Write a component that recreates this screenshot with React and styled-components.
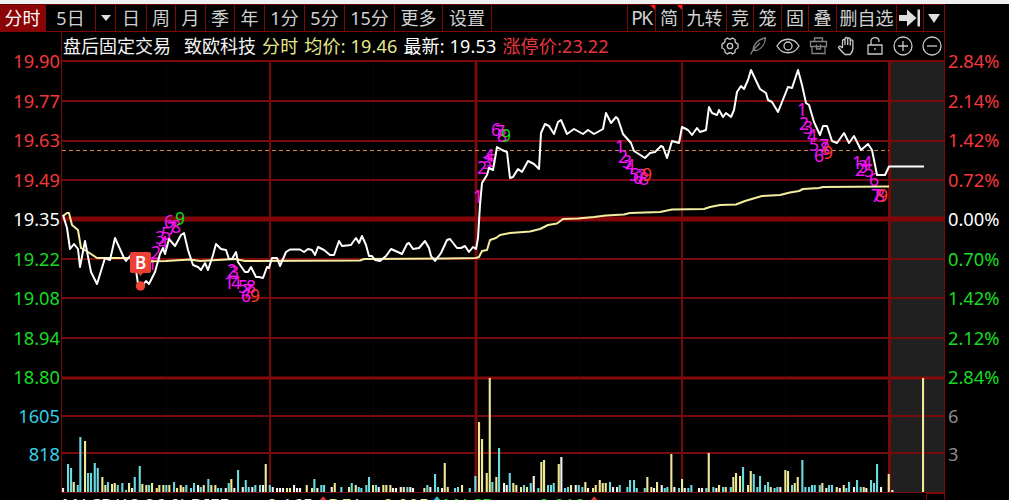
import styled, { createGlobalStyle } from "styled-components";

const periods = [
  { label: "日", width: 31 },
  { label: "周", width: 29 },
  { label: "月", width: 30 },
  { label: "季", width: 29 },
  { label: "年", width: 30 },
  { label: "1分", width: 40 },
  { label: "5分", width: 40 },
  { label: "15分", width: 50 },
  { label: "更多", width: 48 },
  { label: "设置", width: 49 },
];

const tools = [
  { label: "PK", width: 28, corner: true, tight: true },
  { label: "简", width: 27, corner: true },
  { label: "九转", width: 44 },
  { label: "竞", width: 27 },
  { label: "笼", width: 28 },
  { label: "固", width: 27 },
  { label: "叠", width: 28 },
  { label: "删自选", width: 60 },
];

const prices = [
  ["19.90", "2.84%", "up"],
  ["19.77", "2.14%", "up"],
  ["19.63", "1.42%", "up"],
  ["19.49", "0.72%", "up"],
  ["19.35", "0.00%", "flat"],
  ["19.22", "0.70%", "down"],
  ["19.08", "1.42%", "down"],
  ["18.94", "2.12%", "down"],
  ["18.80", "2.84%", "down"],
];

const volumes = [
  ["1605", "6"],
  ["818", "3"],
];

const tones = {
  up: "#f2383c",
  down: "#17dc22",
  flat: "#ffffff",
  volume: "#35cfe6",
  muted: "#8c8c8c",
};

const priceLine =
  "63,215 67,228 70,249 74,244 78,249 80,267 85,241 91,272 97,284 105,258 110,260 115,238 124,258 126,261 130,256 136,270 138,284 142,286 146,281 149,284 155,272 160,254 163,248 165,254 169,239 175,246 181,235 184,233 188,250 193,265 198,267 201,270 205,263 208,270 213,255 216,244 221,249 226,250 229,259 232,259 236,252 238,262 245,272 248,272 251,267 256,277 259,277 263,278 267,267 269,268 272,258 277,258 280,266 286,252 290,249.5 300,249.5 304,252 308,249 312,250 315,255 318,247 324,250 330,255 334,255 339,241 342,246 351,245 353,242 356,238 359,243 362,236 366,245 369,256 372,256 375,260 380,261 386,256 391,249 400,253 402,254 407,244 409,243 413,249 419,248 425,241 429,248 431,256 435,261 441,253 447,240 450,239 457,248 461,248 465,246 469,252 473,247 476,249 478,238 480,205 482,183 487,175 489,168 493,170 497,147 502,150 507,152 510,178 513,177 518,169 522,172 528,161 534,164 539,169 541,133 545,124 549,126 554,134 558,122 561,120 567,134 574,129 583,134 588,130 594,134 603,129 606,113 611,123 616,117 618,119 623,134 631,143 634,151 645,158 650,153 655,152 661,146 663,147 667,158 672,141 679,143 682,127 688,130 692,135 697,128 700,132 706,130 709,107 712,113 717,115 719,110 723,117 726,113 731,117 734,110 737,92 741,86 744,89 748,80 751,70 760,89 766,93 768,100 772,102 778,112 788,87 792,88 798,70 802,85 806,103 809,105 814,122 820,135 823,126 827,126 832,141 837,143 844,133 849,143 854,136 861,150 868,144 872,150 877,175 885,175 889,166.5 924,166.5";

const averageLine =
  "63,216 67,213 69,213 72,225 78,230 81,248 88,252 97,258 130,258 140,261.5 166,261 190,259.5 200,261 235,259 245,261 360,260.5 364,259 445,258.5 476,258 479,257 482,251 487,250 490,240 496,238 500,235 510,233 530,231.5 540,229 548,225 557,223.5 563,219 578,218.5 594,217 606,215.5 624,214.5 630,213 660,212 672,209.5 704,209 710,207 720,205 736,204.5 745,201 762,196 780,195 790,192.5 799,191 803,189 819,188 823,187 889,186.5";

// nine-turn counts: the last number of each run is coloured by direction
const turns = [
  { end: "#12d81c", at: [[152, 264], [156, 253], [160, 238], [163, 243], [166, 234], [169, 222], [172, 229], [176, 227], [180, 219]] },
  { end: "#ff3b30", at: [[229, 283], [232, 271], [234, 273], [236, 283], [243, 287], [246, 296], [248, 291], [251, 287], [255, 296]] },
  { end: "#12d81c", at: [[478, 197], [482, 168], [487, 163], [489, 156], [491, 161], [496, 130], [500, 132], [502, 136], [506, 136]] },
  { end: "#ff3b30", at: [[620, 147], [623, 157], [627, 162], [630, 166], [634, 175], [638, 178], [641, 176], [644, 179], [647, 175]] },
  { end: "#ff3b30", at: [[802, 110], [804, 124], [808, 128], [812, 136], [814, 145], [819, 156], [824, 146], [825, 149], [828, 153]] },
  { end: "#ff3b30", at: [[857, 163], [860, 170], [863, 167], [867, 163], [869, 171], [874, 180], [876, 196], [880, 196], [883, 196]] },
];

// x, height, colour key
const bars =
  "63,4w 68,28c 71,24c 73.7,10y 77.7,7c 80.3,55c 85,51y 88,19c 91,19c 94.7,29c 97.7,24c 102.3,15y 105.3,7y 108,10c 112,8y 114.7,9y 117.7,7c 122.3,9c 126,2c 129,9y 132,4w 134.7,15c 139.7,26c 142.3,8y 146.3,7y 149,7c 152,9y 156.7,4y 159.3,7y 163.3,7y 166.3,7c 169.3,7y 174,10c 177,4y 180.7,7y 183.3,5y 186.3,7c 191,4c 194,9c 198,7w 200.7,5c 203.7,7y 208.3,13c 211.3,7y 215.3,7y 218,4c 221,4c 225.7,4w 228.7,9c 231.3,13y 234.3,4w 238,22c 242.7,5w 245.7,12c 248.7,5c 252.3,5w 255.3,7c 260,7c 263,7w 265.7,28y 269.7,7c 272.7,5w 277,4w 280,4w 283,4w 287,4y 290,4y 294,7w 297,4w 300,4w 306.7,7y 312,4y 314.3,13c 317.3,4w 321.3,7c 324,7c 331.7,5w 334.7,9y 341.3,5c 349,5y 351.7,9c 355.7,7y 358.7,5c 361.3,4c 366.3,7c 369,15c 373,7y 376,7c 378.7,5w 383.3,7y 386.3,7y 390.3,7y 393,4w 396,4w 400.7,5w 403.7,5y 407.3,5c 410.3,5w 413,4w 424.3,4y 427.3,7c 430.3,5w 435,18c 438,5c 442,4w 444.7,29y 447.7,5y 455,4c 458,5c 462,7y 469.7,4c 475.3,16c 479,70y 482,53y 486.7,19y 489.7,114y 492.3,10c 496.3,15y 499,44c 504,9w 506.7,7w 509.7,19c 513.3,9y 516.3,7y 521,5y 524,7c 527,5y 530.7,9c 533.7,16w 538.3,4c 541.3,30y 544,32y 548,7c 551,7c 553.7,9c 558.7,28y 561.3,35w 565,4c 568,5c 571,7y 575.7,7w 578.7,7c 582.3,5c 585.3,10y 588,4w 593,4y 595.7,7y 599.7,12y 602.7,9y 605.7,9y 610,10c 613,5w 617,5w 619.7,7c 627.3,5c 630,12c 634,12c 636.7,4c 644.7,4c 647.3,15y 651.3,5y 654,4w 657,10y 661.7,7w 664.7,4c 667.3,5c 671.3,38y 674.3,5w 679,4c 682,13y 684.7,4w 688.3,4c 691.3,7c 699,4w 702,4w 706.3,4c 708.7,39y 713.3,5c 716.3,4w 719,7y 723,5c 725.7,5y 730.7,5c 733.3,15y 736,19y 740,16y 743,25c 748,7y 750.7,21y 753.7,18c 757.3,5c 760,16c 765,7c 768,10c 770.7,5y 774.5,4c 777.3,5c 780.3,5w 785.3,22y 788,21y 792,7c 794.7,9y 797.7,15y 802.3,32c 805.3,5c 809,5c 812,7c 814.7,7c 819.7,7c 822.3,9y 826.3,4w 829,7c 832,7c 836.7,5y 839.7,4w 843.7,7y 846.3,4c 849,10c 854,5w 857,12c 860.7,5c 863.7,5y 866.3,4w 871,12c 874,9c 877,28c 881,5w 888.7,18y 892.3,2w 923,114y"
    .split(" ")
    .map((item) => {
      const [x, rest] = item.split(",");
      return { x: Number(x), height: parseInt(rest, 10), tone: rest.slice(-1) };
    });

const barTones = { w: "#f4f4ee", c: "#6cdbe0", y: "#efe896" };

function Chart() {
  return (
    <Plot viewBox="62 62 883 431">
      <rect x="891" y="62" width="53" height="430" fill="#202020" />
      <g stroke="#780a0c" strokeWidth="2">
        {[101, 141, 180, 259, 298, 338, 416, 453].map((y) => (
          <path key={y} d={`M62 ${y}H944`} />
        ))}
        <path d="M62 378H944" stroke="#860a0a" strokeWidth="3" />
        <path d="M62 219H944" stroke="#840608" strokeWidth="5" />
        <path d="M270 62V492M682 62V492" />
        <path d="M476 62V492M889.5 62V492" strokeWidth="3" />
        <path d="M62 492.5H944" strokeWidth="1" />
      </g>
      <path
        d="M166.5 62V492M373.5 62V492M579.5 62V492M785.5 62V492"
        stroke="#350606"
        strokeDasharray="1 3"
      />
      <path d="M62 150.5H889" stroke="#d08a52" strokeDasharray="4 3" />
      {bars.map((bar) => (
        <rect
          key={bar.x}
          x={bar.x - 1}
          y={492 - bar.height}
          width="2.1"
          height={bar.height}
          fill={barTones[bar.tone]}
        />
      ))}
      {turns.map((run, index) => (
        <g key={index}>
          {run.at.map(([x, y], i) => (
            <TurnNumber key={i} x={x} y={y + 6.3} fill={i === 8 ? run.end : "#f414f4"}>
              {i + 1}
            </TurnNumber>
          ))}
        </g>
      ))}
      <Line points={averageLine} stroke="#f3eda0" />
      <Line points={priceLine} stroke="#ffffff" />
      <circle cx="140.5" cy="286" r="4.7" fill="#f04432" />
      <path
        d="M132 252h17a2 2 0 0 1 2 2v17a2 2 0 0 1-2 2h-6l-2.500 3-2.500-3h-6a2 2 0 0 1-2-2v-17a2 2 0 0 1 2-2z"
        fill="#ee3f35"
      />
      <BuyText x="140.500" y="269">
        B
      </BuyText>
    </Plot>
  );
}

function App() {
  return (
    <Screen>
      <GlobalStyle />
      <TopEdge />
      <Toolbar>
        <Tab $width={46} $active>
          分时
        </Tab>
        <Tab $width={50}>5日</Tab>
        <Tab $width={20}>
          <Arrow />
        </Tab>
        {periods.map((item) => (
          <Tab key={item.label} $width={item.width}>
            {item.label}
          </Tab>
        ))}
        <Tools>
          {tools.map((item) => (
            <Tab key={item.label} $width={item.width} $tight={item.tight}>
              {item.label}
              {item.corner && <Corner />}
            </Tab>
          ))}
          <Tab $width={27}>
            <svg width="22" height="20" viewBox="0 0 22 20" fill="#dedede">
              <path d="M0 7h8V1.500l9.500 8.500L8 18.500V13H0zM18.500 1.500H21v17h-2.500z" />
            </svg>
          </Tab>
          <Tab $width={21}>
            <Arrow $large />
          </Tab>
        </Tools>
      </Toolbar>

      <Body>
        <Axis $side="left">
          {prices.map(([price, , tone]) => (
            <Tick key={price} $tone={tone}>
              {price}
            </Tick>
          ))}
          {volumes.map(([amount]) => (
            <Tick key={amount} $tone="volume" $short>
              {amount}
            </Tick>
          ))}
        </Axis>
        <Center>
          <Info>
            <Name>盘后固定交易</Name>
            <Name>致欧科技</Name>
            <Value $color="#e9e98c">分时</Value>
            <Value $color="#e9e98c">均价: 19.46</Value>
            <Value $color="#ffffff">最新: 19.53</Value>
            <Value $color="#e8363f">涨停价:23.22</Value>
            <Actions>
              <svg width="20" height="20" viewBox="0 0 20 20">
                <path d="M7.500 2Q10 4.500 12.500 2L15 3.500Q14.500 7 18 8v4q-3.500 1-3 4.500L12.500 18Q10 15.500 7.500 18L5 16.500Q5.500 13 2 12V8q3.500-1 3-4.500z" />
                <circle cx="10" cy="10" r="2.700" />
              </svg>
              <Dim width="18" height="20" viewBox="0 0 18 20">
                <path d="M1.500 18.500L4 14C4.500 8.500 9 3 16.500 2c-.5 6-4 11-9 12.500L4 14M4 14L11 7" />
              </Dim>
              <svg width="24" height="20" viewBox="0 0 24 20">
                <path d="M1 10C6 1 18 1 23 10 18 19 6 19 1 10z" />
                <circle cx="12" cy="10" r="4" />
              </svg>
              <Dim width="19" height="20" viewBox="0 0 19 20">
                <path d="M5.500 5.500V2h8v3.500M1.500 5.500h16v5h-16zM3 10.500v7h13v-7M7.500 8.500v4.500h4V8.500" />
              </Dim>
              <svg width="20" height="20" viewBox="0 0 20 20">
                <path d="M5.500 12V4.500q1.200-2 2.500 0V9V2.500q1.300-2 2.700 0V9V2.800q1.300-2 2.600 0V9.500V4.800q1.300-1.800 2.600 0V12q0 4-2.900 6.500H8Q4.500 15.500 1.500 11.500q.8-2 2.500-.8L5.500 12" />
              </svg>
              <svg width="18" height="20" viewBox="0 0 18 20">
                <path d="M2 9h14v9H2zM5 9V5c0-4.500 8-4.500 8 0v1M9 12v2" />
              </svg>
              <svg width="20" height="20" viewBox="0 0 20 20">
                <circle cx="10" cy="10" r="9" />
                <path d="M5 10h10M10 5v10" />
              </svg>
              <svg width="20" height="20" viewBox="0 0 20 20">
                <circle cx="10" cy="10" r="9" />
                <path d="M5 10h10" />
              </svg>
            </Actions>
          </Info>
          <Chart />
        </Center>
        <Axis $side="right">
          {prices.map(([price, percent, tone]) => (
            <Tick key={price} $tone={tone}>
              {percent}
            </Tick>
          ))}
          {volumes.map(([, amount]) => (
            <Tick key={amount} $tone="muted" $short>
              {amount}
            </Tick>
          ))}
        </Axis>
      </Body>

      <Footer>
        <FooterText $width={205} $color="#f0f0f0">MACD(12,26,9) DIFF:</FooterText>
        <FooterText $width={47} $color="#f0f0f0">0.165</FooterText>
        <FooterText $width={14} $color="#f2383c">↑</FooterText>
        <FooterText $width={55} $color="#e9e98c">DEA:</FooterText>
        <FooterText $width={45} $color="#e9e98c">0.005</FooterText>
        <FooterText $width={15} $color="#35cfe6">↑</FooterText>
        <FooterText $width={96} $color="#17dc22">MACD:</FooterText>
        <FooterText $width={46} $color="#17dc22">0.010</FooterText>
        <FooterText $width={14} $color="#f2383c">↑</FooterText>
        <FooterBox />
      </Footer>
    </Screen>
  );
}

export default App;

const GlobalStyle = createGlobalStyle`
  body {
    margin: 0;
    background: #000;
    overflow: hidden;
  }
`;

const Screen = styled.div`
  width: 1009px;
  height: 500px;
  display: flex;
  flex-direction: column;
  overflow: hidden;
  background: #000;
  color: #d6d6d6;
  font-family: "Noto Sans", "Noto Sans CJK SC", sans-serif;
  font-size: 18px;
`;

const TopEdge = styled.div`
  height: 4px;
  flex: none;
  background: #f1f0f0;
`;

const Toolbar = styled.div`
  display: flex;
  width: 945px;
  height: 28px;
  flex: none;
  box-sizing: border-box;
  border-top: 1px solid #650606;
  border-bottom: 1px solid #7c0808;
`;

const Tab = styled.div`
  position: relative;
  display: flex;
  align-items: center;
  justify-content: center;
  box-sizing: border-box;
  width: ${(props) => props.$width}px;
  flex: none;
  border-right: 1px solid #7c0808;
  background: ${(props) => (props.$active ? "#8c0306" : "transparent")};
  color: ${(props) => (props.$active ? "#ffffff" : "#d0d0d0")};
  font-size: ${(props) => (props.$tight ? 19 : 18)}px;
  letter-spacing: ${(props) => (props.$tight ? "-1.5px" : "0")};
  line-height: 26px;
  white-space: nowrap;
`;

const Tools = styled.div`
  display: flex;
  margin-left: auto;
  border-left: 1px solid #7c0808;
`;

const Corner = styled.span`
  position: absolute;
  top: 0;
  right: 0;
  border-top: 5px solid #ff1c1c;
  border-left: 5px solid transparent;
`;

const Arrow = styled.span`
  border-top: ${(props) => (props.$large ? 9 : 6)}px solid #dedede;
  border-left: ${(props) => (props.$large ? 6 : 5.5)}px solid transparent;
  border-right: ${(props) => (props.$large ? 6 : 5.5)}px solid transparent;
`;

const Body = styled.div`
  display: grid;
  grid-template-columns: 61px 884px 64px;
  height: 461px;
  flex: none;
`;

const Axis = styled.div`
  padding: 9px ${(props) => (props.$side === "left" ? "1px 0 0" : "0 0 3px")};
  text-align: ${(props) => (props.$side === "left" ? "right" : "left")};
`;

const Tick = styled.div`
  height: ${(props) => (props.$short ? 38 : 39.5)}px;
  line-height: ${(props) => (props.$short ? 38 : 39.5)}px;
  font-size: 18.3px;
  color: ${(props) => tones[props.$tone]};
`;

const Center = styled.div`
  display: flex;
  flex-direction: column;
  box-sizing: border-box;
  border-left: 1px solid #7c0808;
  border-right: 1px solid #7c0808;
`;

const Info = styled.div`
  display: flex;
  align-items: center;
  height: 30px;
  flex: none;
  box-sizing: border-box;
  padding: 0 2px 0 1px;
  border-bottom: 2px solid #7c0808;
  line-height: 28px;
  white-space: nowrap;
`;

const Name = styled.span`
  margin-right: 13px;
  color: #f4f4f4;
  & + & {
    margin-right: 6px;
  }
`;

const Value = styled.span`
  margin-right: 6px;
  color: ${(props) => props.$color};
  letter-spacing: 0.17px;
`;

const Actions = styled.div`
  display: flex;
  align-items: center;
  gap: 9px;
  margin-left: auto;
  svg {
    fill: none;
    stroke: #c9c9c9;
    stroke-width: 1.3;
  }
`;

const Dim = styled.svg`
  opacity: 0.65;
`;

const Plot = styled.svg`
  display: block;
  width: 883px;
  height: 431px;
`;

const Line = styled.polyline`
  fill: none;
  stroke-width: 2;
  stroke-linejoin: round;
`;

const TurnNumber = styled.text`
  font-size: 17.5px;
  text-anchor: middle;
`;

const BuyText = styled.text`
  fill: #fff;
  font-size: 17px;
  font-weight: 600;
  text-anchor: middle;
`;

const Footer = styled.div`
  display: flex;
  height: 7px;
  padding-left: 62px;
  overflow: hidden;
`;

const FooterText = styled.span`
  width: ${(props) => props.$width}px;
  flex: none;
  line-height: 24px;
  height: 7px;
  color: ${(props) => props.$color};
  white-space: nowrap;
`;

const FooterBox = styled.span`
  width: 19px;
  height: 10px;
  margin-left: auto;
  margin-right: 64px;
  box-sizing: border-box;
  border: 1px solid #7c0808;
`;
